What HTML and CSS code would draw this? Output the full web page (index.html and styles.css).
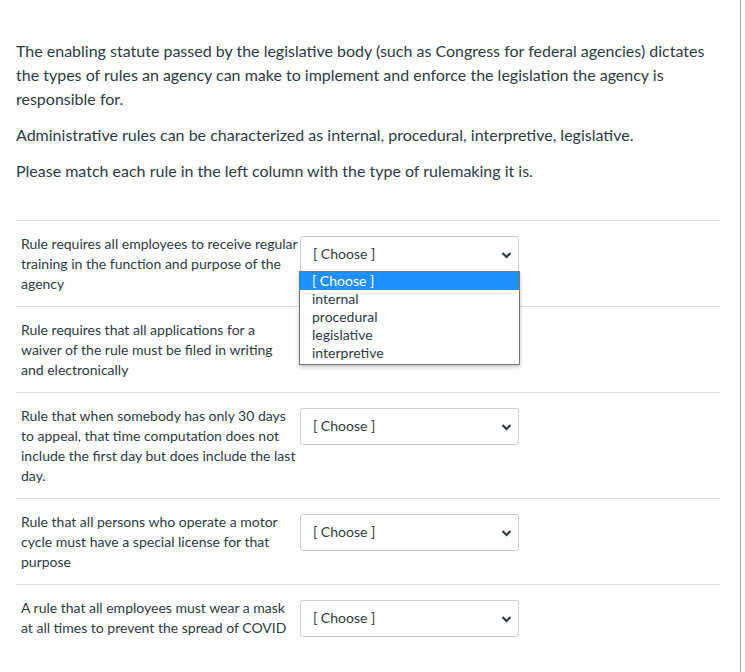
FILE: index.html
```html
<!DOCTYPE html>
<html lang="en">
<head>
  <meta charset="UTF-8" />
  <title>Matching question</title>
  <link rel="stylesheet" href="styles.css">
</head>
<body>
  <div class="page">
    <div class="question-text">
      <p>The enabling statute passed by the legislative body (such as Congress for federal agencies) dictates the types of rules an agency can make to implement and enforce the legislation the agency is responsible for.</p>
      <p>Administrative rules can be characterized as internal, procedural, interpretive, legislative.</p>
      <p>Please match each rule in the left column with the type of rulemaking it is.</p>
    </div>

    <div class="answers">
      <div class="answer-row">
        <div class="answer-label">Rule requires all employees to receive regular training in the function and purpose of the agency</div>
        <div class="answer-select">
          <div class="select-box">[ Choose ]</div>
          <ul class="select-menu">
            <li class="active">[ Choose ]</li>
            <li>internal</li>
            <li>procedural</li>
            <li>legislative</li>
            <li>interpretive</li>
          </ul>
        </div>
      </div>
      <div class="answer-row">
        <div class="answer-label">Rule requires that all applications for a waiver of the rule must be filed in writing and electronically</div>
        <div class="answer-select">
          <div class="select-box">[ Choose ]</div>
        </div>
      </div>
      <div class="answer-row">
        <div class="answer-label">Rule that when somebody has only 30 days to appeal, that time computation does not include the first day but does include the last day.</div>
        <div class="answer-select">
          <div class="select-box">[ Choose ]</div>
        </div>
      </div>
      <div class="answer-row">
        <div class="answer-label">Rule that all persons who operate a motor cycle must have a special license for that purpose</div>
        <div class="answer-select">
          <div class="select-box">[ Choose ]</div>
        </div>
      </div>
      <div class="answer-row">
        <div class="answer-label">A rule that all employees must wear a mask at all times to prevent the spread of COVID</div>
        <div class="answer-select">
          <div class="select-box">[ Choose ]</div>
        </div>
      </div>
    </div>
  </div>
</body>
</html>
```

FILE: styles.css
```css
*, *::before, *::after {
  box-sizing: border-box;
}
html, body {
  margin: 0;
  background: #fff;
}
body {
  font-family: Lato, "Helvetica Neue", Arial, sans-serif;
  color: #2d3b45;
}

.page {
  width: 741px;
  min-height: 672px;
  padding: 39px 20px 0 16px;
  border-right: 1px solid #a6a6a6;
}

.question-text p {
  margin: 0 0 12px;
  font-size: 16px;
  line-height: 24px;
}

.answers {
  margin-top: 37px;
}

.answer-row {
  display: flex;
  align-items: flex-start;
  border-top: 1px solid #dcdfe1;
  padding: 13px 0 12px 5px;
}

.answer-label {
  width: 277px;
  font-size: 14px;
  line-height: 20px;
}

.answer-select {
  position: relative;
  margin: 2px 0 0 2px;
  width: 219px;
}

.select-box {
  height: 37px;
  padding: 0 12px;
  border: 1px solid #c7cdd1;
  border-radius: 3px;
  font-size: 14px;
  line-height: 34px;
  background: #fff url("data:image/svg+xml,%3Csvg xmlns='http://www.w3.org/2000/svg' width='11' height='8' viewBox='0 0 11 8'%3E%3Cpath d='M1.5 2 5.5 6 9.5 2' fill='none' stroke='%232d3b45' stroke-width='2.2'/%3E%3C/svg%3E") no-repeat right 6px center;
}

.select-menu {
  position: absolute;
  top: 35px;
  left: -1px;
  width: 221px;
  margin: 0;
  padding: 0 0 2px;
  list-style: none;
  background: #fff;
  border: 1px solid #767676;
  box-shadow: 0 2px 4px rgba(0, 0, 0, 0.25);
  font-size: 14px;
  line-height: 18px;
  z-index: 10;
}

.select-menu li {
  padding: 0 12px;
  color: #2d3b45;
}

.select-menu li.active {
  background: #1e90ff;
  color: #fff;
}
```
